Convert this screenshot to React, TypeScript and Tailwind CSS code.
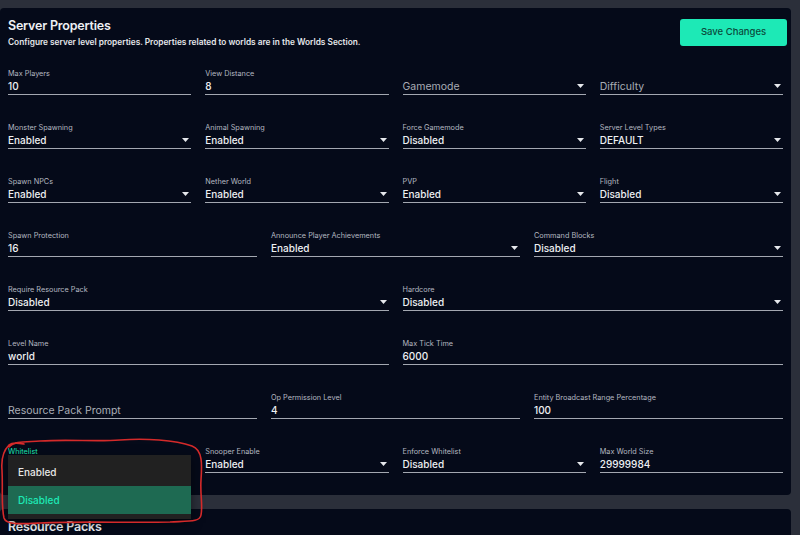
import React from "react";

type F = {
  label?: string;
  value?: string;
  placeholder?: string;
  select?: boolean;
  open?: boolean;
};

function Arrow() {
  return (
    <svg
      className="absolute right-[2px] top-[15px]"
      width="7"
      height="4"
      viewBox="0 0 7 4"
    >
      <path d="M0 0 L7 0 L3.5 4 Z" fill="#e6e8ec" />
    </svg>
  );
}

function Field({ label, value, placeholder, select, open }: F) {
  return (
    <div className="relative">
      <div
        className={
          "h-[10px] whitespace-nowrap text-[7.3px] leading-[10px] " +
          (open ? "text-[#1de9b6]" : "text-[#b4b8c0]")
        }
      >
        {label ?? ""}
      </div>
      <div className="flex h-[15px] items-center">
        {open ? null : value ? (
          <span className="text-[10px] font-medium text-[#eef0f3]">{value}</span>
        ) : (
          <span className="text-[10.5px] text-[#a9adb5]">{placeholder}</span>
        )}
      </div>
      <div className="h-px bg-[#a4a8b1]" />
      {select && <Arrow />}
      {open && (
        <div className="absolute left-0 right-0 top-[8px] z-10 bg-[#212121] pb-[5px] pt-[3px] shadow-[0_4px_10px_rgba(0,0,0,0.5)]">
          <div className="flex h-[28px] items-center px-[10px] text-[10px] font-medium text-[#e8e8e8]">
            Enabled
          </div>
          <div className="flex h-[28px] items-center bg-[#1e6a52] px-[10px] text-[10px] font-medium text-[#1de9b6]">
            Disabled
          </div>
        </div>
      )}
    </div>
  );
}

function Row({ cols, items }: { cols: 2 | 3 | 4; items: F[] }) {
  const cls =
    cols === 4 ? "grid-cols-4" : cols === 3 ? "grid-cols-3" : "grid-cols-2";
  return (
    <div className={"grid gap-x-[14px] " + cls}>
      {items.map((it, i) => (
        <Field key={i} {...it} />
      ))}
    </div>
  );
}

export default function App() {
  return (
    <div
      className="relative h-[535px] w-[800px] overflow-hidden bg-[#2b2f3a] pt-[8px]"
      style={{ fontFamily: "Inter, 'Noto Sans', sans-serif" }}
    >
      <div className="mr-[9px] rounded-[4px] bg-[#050a19] px-[8px] pb-[22px] pt-[9px]">
        <div className="flex items-start justify-between">
          <div>
            <div className="h-[18px] text-[12.5px] font-semibold leading-[18px] tracking-[-0.2px] text-[#eef0f4]">
              Server Properties
            </div>
            <div className="h-[14px] text-[8.3px] font-semibold leading-[14px] text-[#e4e6ea]">
              Configure server level properties. Properties related to worlds are in the Worlds Section.
            </div>
          </div>
          <button className="-mr-[4px] mt-[2px] flex h-[27px] w-[107px] items-center justify-center rounded-[3px] bg-[#1de9b6] text-[9.5px] font-medium text-[#0b4a3b]">
            Save Changes
          </button>
        </div>

        <div className="mt-[20px] flex flex-col gap-[28px]">
          <Row
            cols={4}
            items={[
              { label: "Max Players", value: "10" },
              { label: "View Distance", value: "8" },
              { placeholder: "Gamemode", select: true },
              { placeholder: "Difficulty", select: true },
            ]}
          />
          <Row
            cols={4}
            items={[
              { label: "Monster Spawning", value: "Enabled", select: true },
              { label: "Animal Spawning", value: "Enabled", select: true },
              { label: "Force Gamemode", value: "Disabled", select: true },
              { label: "Server Level Types", value: "DEFAULT", select: true },
            ]}
          />
          <Row
            cols={4}
            items={[
              { label: "Spawn NPCs", value: "Enabled", select: true },
              { label: "Nether World", value: "Enabled", select: true },
              { label: "PVP", value: "Enabled", select: true },
              { label: "Flight", value: "Disabled", select: true },
            ]}
          />
          <Row
            cols={3}
            items={[
              { label: "Spawn Protection", value: "16" },
              { label: "Announce Player Achievements", value: "Enabled", select: true },
              { label: "Command Blocks", value: "Disabled", select: true },
            ]}
          />
          <Row
            cols={2}
            items={[
              { label: "Require Resource Pack", value: "Disabled", select: true },
              { label: "Hardcore", value: "Disabled", select: true },
            ]}
          />
          <Row
            cols={2}
            items={[
              { label: "Level Name", value: "world" },
              { label: "Max Tick Time", value: "6000" },
            ]}
          />
          <Row
            cols={3}
            items={[
              { placeholder: "Resource Pack Prompt" },
              { label: "Op Permission Level", value: "4" },
              { label: "Entity Broadcast Range Percentage", value: "100" },
            ]}
          />
          <Row
            cols={4}
            items={[
              { label: "Whitelist", value: "Disabled", select: true, open: true },
              { label: "Snooper Enable", value: "Enabled", select: true },
              { label: "Enforce Whitelist", value: "Disabled", select: true },
              { label: "Max World Size", value: "29999984" },
            ]}
          />
        </div>
      </div>

      <div className="mr-[9px] mt-[14px] h-[60px] rounded-[4px] bg-[#050a19] px-[8px] pt-[9px]">
        <div className="h-[18px] text-[12.5px] font-semibold leading-[18px] tracking-[-0.2px] text-[#eef0f4]">
          Resource Packs
        </div>
      </div>

      <svg
        className="pointer-events-none absolute left-0 top-0 z-20"
        width="800"
        height="535"
        viewBox="0 0 800 535"
        fill="none"
      >
        <path
          d="M9 447 C14 441 26 442 40 441 C70 439 95 442 120 440 C145 438 175 440 192 446 C203 450 202 465 201 480 C200 495 203 505 201 515 C200 522 190 521 170 522 C130 523 80 521 40 523 C20 524 6 525 4 518 C1 505 3 490 2 470 C1 458 3 451 9 445 C13 442 18 443 24 444"
          stroke="#d42a2a"
          strokeWidth="1.6"
          strokeLinecap="round"
        />
      </svg>
    </div>
  );
}
